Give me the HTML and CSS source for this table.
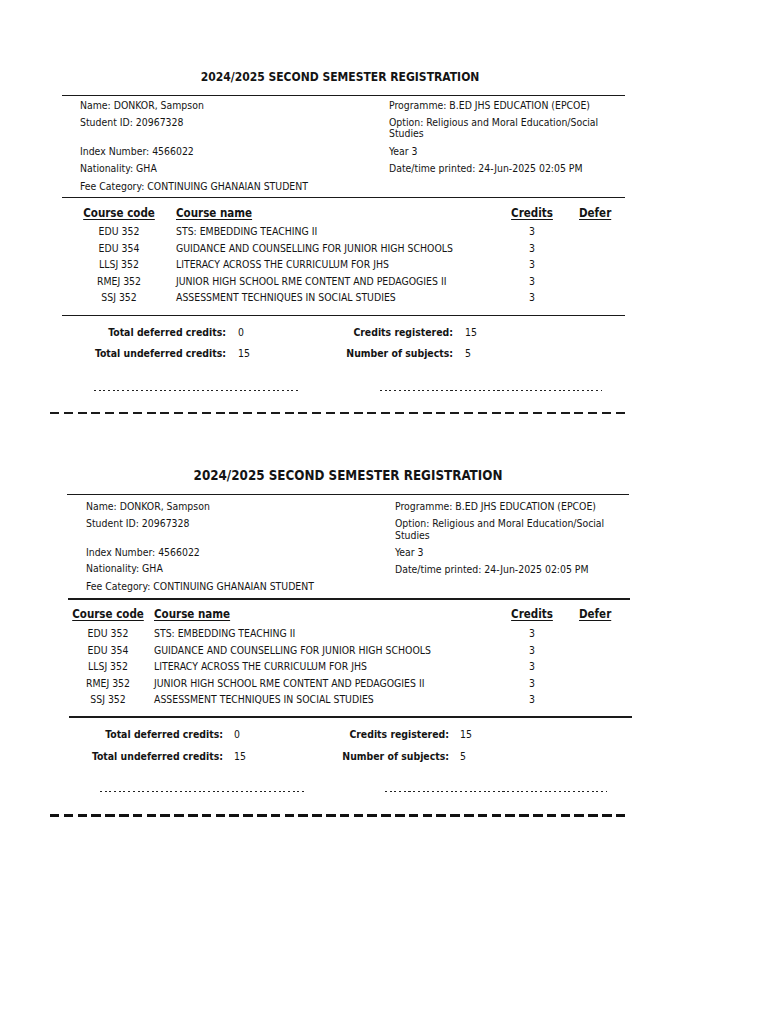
FILE: index.html
```html
<!DOCTYPE html>
<html lang="en">
<head>
<meta charset="utf-8">
<title>2024/2025 Second Semester Registration</title>
<link rel="stylesheet" href="styles.css">
</head>
<body>
<main class="page">
  <section class="slip slip--first">
    <h1 class="slip__title">2024/2025 SECOND SEMESTER REGISTRATION</h1>
    <div class="info">
      <div class="info__cell">Name: DONKOR, Sampson</div>
      <div class="info__cell">Programme: B.ED JHS EDUCATION (EPCOE)</div>
      <div class="info__cell">Student ID: 20967328</div>
      <div class="info__cell">Option: Religious and Moral Education/Social Studies</div>
      <div class="info__cell">Index Number: 4566022</div>
      <div class="info__cell">Year 3</div>
      <div class="info__cell">Nationality: GHA</div>
      <div class="info__cell">Date/time printed: 24-Jun-2025 02:05 PM</div>
      <div class="info__cell">Fee Category: CONTINUING GHANAIAN STUDENT</div>
      <div class="info__cell"></div>
    </div>
    <div class="courses">
      <div class="courses__row courses__row--head">
        <span class="c-code">Course code</span>
        <span class="c-name">Course name</span>
        <span class="c-credits">Credits</span>
        <span class="c-defer">Defer</span>
      </div>
      <div class="courses__row"><span class="c-code">EDU 352</span><span class="c-name">STS: EMBEDDING TEACHING II</span><span class="c-credits">3</span><span class="c-defer"></span></div>
      <div class="courses__row"><span class="c-code">EDU 354</span><span class="c-name">GUIDANCE AND COUNSELLING FOR JUNIOR HIGH SCHOOLS</span><span class="c-credits">3</span><span class="c-defer"></span></div>
      <div class="courses__row"><span class="c-code">LLSJ 352</span><span class="c-name">LITERACY ACROSS THE CURRICULUM FOR JHS</span><span class="c-credits">3</span><span class="c-defer"></span></div>
      <div class="courses__row"><span class="c-code">RMEJ 352</span><span class="c-name">JUNIOR HIGH SCHOOL RME CONTENT AND PEDAGOGIES II</span><span class="c-credits">3</span><span class="c-defer"></span></div>
      <div class="courses__row"><span class="c-code">SSJ 352</span><span class="c-name">ASSESSMENT TECHNIQUES IN SOCIAL STUDIES</span><span class="c-credits">3</span><span class="c-defer"></span></div>
    </div>
    <div class="totals">
      <span class="totals__label">Total deferred credits:</span><span class="totals__value">0</span>
      <span class="totals__label">Credits registered:</span><span class="totals__value">15</span>
      <span class="totals__label">Total undeferred credits:</span><span class="totals__value">15</span>
      <span class="totals__label">Number of subjects:</span><span class="totals__value">5</span>
    </div>
    <div class="signs">
      <span class="sign sign--left"></span>
      <span class="sign sign--right"></span>
    </div>
    <div class="cutline"></div>
  </section>

  <section class="slip slip--second">
    <h1 class="slip__title">2024/2025 SECOND SEMESTER REGISTRATION</h1>
    <div class="info">
      <div class="info__cell">Name: DONKOR, Sampson</div>
      <div class="info__cell">Programme: B.ED JHS EDUCATION (EPCOE)</div>
      <div class="info__cell">Student ID: 20967328</div>
      <div class="info__cell">Option: Religious and Moral Education/Social Studies</div>
      <div class="info__cell">Index Number: 4566022</div>
      <div class="info__cell">Year 3</div>
      <div class="info__cell">Nationality: GHA</div>
      <div class="info__cell info__cell--low">Date/time printed: 24-Jun-2025 02:05 PM</div>
      <div class="info__cell">Fee Category: CONTINUING GHANAIAN STUDENT</div>
      <div class="info__cell"></div>
    </div>
    <div class="courses">
      <div class="courses__row courses__row--head">
        <span class="c-code">Course code</span>
        <span class="c-name">Course name</span>
        <span class="c-credits">Credits</span>
        <span class="c-defer">Defer</span>
      </div>
      <div class="courses__row"><span class="c-code">EDU 352</span><span class="c-name">STS: EMBEDDING TEACHING II</span><span class="c-credits">3</span><span class="c-defer"></span></div>
      <div class="courses__row"><span class="c-code">EDU 354</span><span class="c-name">GUIDANCE AND COUNSELLING FOR JUNIOR HIGH SCHOOLS</span><span class="c-credits">3</span><span class="c-defer"></span></div>
      <div class="courses__row"><span class="c-code">LLSJ 352</span><span class="c-name">LITERACY ACROSS THE CURRICULUM FOR JHS</span><span class="c-credits">3</span><span class="c-defer"></span></div>
      <div class="courses__row"><span class="c-code">RMEJ 352</span><span class="c-name">JUNIOR HIGH SCHOOL RME CONTENT AND PEDAGOGIES II</span><span class="c-credits">3</span><span class="c-defer"></span></div>
      <div class="courses__row"><span class="c-code">SSJ 352</span><span class="c-name">ASSESSMENT TECHNIQUES IN SOCIAL STUDIES</span><span class="c-credits">3</span><span class="c-defer"></span></div>
    </div>
    <div class="totals">
      <span class="totals__label">Total deferred credits:</span><span class="totals__value">0</span>
      <span class="totals__label">Credits registered:</span><span class="totals__value">15</span>
      <span class="totals__label">Total undeferred credits:</span><span class="totals__value">15</span>
      <span class="totals__label">Number of subjects:</span><span class="totals__value">5</span>
    </div>
    <div class="signs">
      <span class="sign sign--left"></span>
      <span class="sign sign--right"></span>
    </div>
    <div class="cutline cutline--bold"></div>
  </section>
</main>
</body>
</html>
```

FILE: styles.css
```css
html, body {
  margin: 0;
  padding: 0;
  background: #ffffff;
}

body {
  font-family: "DejaVu Sans Condensed", "DejaVu Sans", sans-serif;
  font-size: 10.4px;
  color: #141414;
  width: 768px;
  min-height: 1024px;
}

.page {
  padding: 70px 0 0 50px;
  width: 577px;
}

/* ---------- slip ---------- */
.slip__title {
  margin: 0 0 11px 0;
  font-size: 12px;
  font-weight: bold;
  line-height: 14px;
  text-align: center;
  letter-spacing: 0;
}

.slip--first .slip__title {
  width: 563px;
  margin-left: 12px;
  padding-right: 7px;
  box-sizing: border-box;
}

.slip--second {
  margin-top: 55px;
}

.slip--second .slip__title {
  font-size: 13.3px;
  width: 562px;
  margin-left: 17px;
}

/* ---------- info ---------- */
.info {
  display: grid;
  grid-template-columns: 309px 232px;
  row-gap: 6.5px;
  line-height: 11px;
  border-top: 1px solid #1a1a1a;
  padding: 3.5px 0 5.5px 18px;
  width: 545px;
  margin-left: 12px;
}

.slip--second .info {
  margin-left: 17px;
  padding: 5px 0 6px 19px;
  line-height: 12.5px;
  row-gap: 4px;
  width: 543px;
}

.info__cell--low {
  padding-top: 1px;
}

/* ---------- courses ---------- */
.courses {
  border-top: 1px solid #1a1a1a;
  padding: 8px 0 9.5px 0;
  width: 563px;
  margin-left: 12px;
}

.courses__row {
  display: grid;
  grid-template-columns: 114px 335px 42px auto;
  line-height: 16.5px;
}

.courses__row--head {
  font-size: 11.5px;
  font-weight: bold;
  line-height: 14px;
  margin-bottom: 3px;
}

.courses__row--head span {
  text-decoration: underline;
  text-decoration-thickness: 1px;
  text-underline-offset: 2px;
}

.c-code {
  text-align: center;
}

.c-credits {
  text-align: center;
}

.c-defer {
  padding-left: 26px;
}

.slip--second .courses {
  border-top: 2px solid #1a1a1a;
  padding: 7px 0 8.5px 0;
  margin-left: 18px;
  width: 562px;
}

.slip--second .courses__row {
  grid-template-columns: 80px 363px 42px auto;
}

.slip--second .c-name {
  padding-left: 6px;
}

.slip--second .courses__row--head {
  margin-bottom: 4px;
}

/* ---------- totals ---------- */
.totals {
  display: grid;
  grid-template-columns: 164px 40px 163px auto;
  column-gap: 12px;
  row-gap: 7px;
  line-height: 14px;
  border-top: 1px solid #1a1a1a;
  padding-top: 9px;
  width: 563px;
  margin-left: 12px;
}

.totals__label {
  font-weight: bold;
  text-align: right;
}

.slip--second .totals {
  grid-template-columns: 154px 40px 164px auto;
  column-gap: 11px;
  row-gap: 8px;
  border-top: 2px solid #1a1a1a;
  margin-left: 19px;
  width: 563px;
}

/* ---------- signature lines ---------- */
.signs {
  display: flex;
  gap: 82px;
  margin: 29.5px 0 0 44px;
  height: 1px;
}

.sign {
  display: block;
  height: 1px;
  background: repeating-linear-gradient(to right, #222 0 2px, transparent 2px 4.7px);
}

.sign--left {
  width: 204px;
}

.sign--right {
  width: 222px;
}

.slip--second .signs {
  margin: 27.5px 0 0 50px;
  gap: 81px;
}

/* ---------- cut line ---------- */
.cutline {
  margin-top: 21.5px;
  height: 2px;
  width: 577px;
  background: repeating-linear-gradient(to right, #1a1a1a 0 9px, transparent 9px 13.8px);
}

.cutline--bold {
  margin-top: 22.5px;
  height: 2.5px;
  background: repeating-linear-gradient(to right, #111 0 9.5px, transparent 9.5px 13.8px);
}
```
